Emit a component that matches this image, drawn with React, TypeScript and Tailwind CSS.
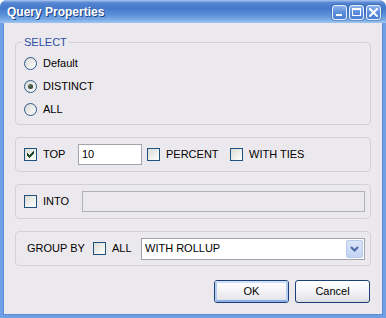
import React from "react";

const CHECK_PIXELS = [
  [6, 0],
  [5, 1], [6, 1],
  [0, 2], [4, 2], [5, 2], [6, 2],
  [0, 3], [1, 3], [3, 3], [4, 3], [5, 3],
  [0, 4], [1, 4], [2, 4], [3, 4], [4, 4],
  [1, 5], [2, 5], [3, 5],
  [2, 6],
];

function Check({ checked }: { checked?: boolean }) {
  return (
    <span className="w-[13px] h-[13px] shrink-0 border border-[#1c5180] bg-[linear-gradient(135deg,#dcdcd4_0%,#f4f4f2_70%,#ffffff_100%)] flex items-center justify-center">
      {checked && (
        <svg width="7" height="7" viewBox="0 0 7 7" shapeRendering="crispEdges">
          {CHECK_PIXELS.map(([x, y]) => (
            <rect key={`${x}-${y}`} x={x} y={y} width="1" height="1" fill="#1e4a2c" />
          ))}
        </svg>
      )}
    </span>
  );
}

function Radio({ checked }: { checked?: boolean }) {
  return (
    <span className="w-[13px] h-[13px] shrink-0 rounded-full border border-[#2a5a8c] bg-[linear-gradient(135deg,#d6d6d0_0%,#f2f2f0_65%,#ffffff_100%)] flex items-center justify-center">
      {checked && <span className="w-[5px] h-[5px] rounded-full bg-[radial-gradient(circle_at_35%_35%,#5a7a5e,#1c2e20)]" />}
    </span>
  );
}

function RadioRow({ label, checked }: { label: string; checked?: boolean }) {
  return (
    <div className="h-[23px] flex items-center pl-[8px]">
      <Radio checked={checked} />
      <span className="ml-[6px] text-black">{label}</span>
    </div>
  );
}

function TitleButton({ children }: { children: React.ReactNode }) {
  return (
    <div className="w-[15px] h-[15px] rounded-[3px] border border-[#e8f0fc] bg-[linear-gradient(180deg,#8cb3ec_0%,#5b8ddb_50%,#4a7ed2_100%)] flex items-center justify-center shadow-[0_0_0_1px_rgba(40,80,150,0.35)]">
      {children}
    </div>
  );
}

function Group({ children, className = "" }: { children: React.ReactNode; className?: string }) {
  return (
    <div className={`border border-[#d3d0d8] rounded-[4px] ${className}`}>{children}</div>
  );
}

function Button({ label, isDefault }: { label: string; isDefault?: boolean }) {
  return (
    <div className="w-[75px] h-[23px] rounded-[3px] border border-[#1c3f76] bg-[linear-gradient(180deg,#ffffff_0%,#f6f6f8_40%,#e6e6ec_85%,#d6d6de_100%)] flex items-center justify-center">
      <div
        className={`w-full h-full rounded-[2px] flex items-center justify-center ${
          isDefault ? "border-[2px] border-[#b6cdf2] border-t-[#cfe0fb] border-b-[#8fb0e8]" : ""
        }`}
      >
        <span className="text-black leading-none">{label}</span>
      </div>
    </div>
  );
}

export default function App() {
  return (
    <div className="w-[386px] h-[318px] font-['Liberation_Sans',Arial,sans-serif] text-[11px] select-none bg-white">
      <div className="w-[386px] h-[318px] flex flex-col rounded-t-[7px] overflow-hidden bg-[#6f9fe4]">
        {/* Title bar */}
        <div className="h-[23px] shrink-0 flex items-center pl-[7px] pr-[5px] bg-[linear-gradient(180deg,#a9c6f0_0%,#5585d2_12%,#4479cb_35%,#5a8fd8_65%,#7aaae6_85%,#a0c4f1_100%)]">
          <span className="text-white font-bold text-[12px] [text-shadow:1px_1px_0_#1e3f80] tracking-[0px]">
            Query Properties
          </span>
          <div className="ml-auto flex items-center gap-[2px] mt-[1px]">
            <TitleButton>
              <span className="w-[6px] h-[2px] bg-white mt-[6px] -ml-[2px]" />
            </TitleButton>
            <TitleButton>
              <span className="w-[9px] h-[8px] border border-white border-t-[2px]" />
            </TitleButton>
            <TitleButton>
              <svg width="9" height="9" viewBox="0 0 9 9">
                <path d="M1 1 L8 8 M8 1 L1 8" stroke="#ffffff" strokeWidth="2" strokeLinecap="square" />
              </svg>
            </TitleButton>
          </div>
        </div>

        {/* Client area */}
        <div className="flex-1 mx-[3px] mb-[3px] bg-[#ece9ee] border-l border-r border-b border-[#5b8ad6] flex flex-col px-[11px] pt-[13px]">
          {/* SELECT */}
          <fieldset className="border border-[#d3d0d8] rounded-[4px] pb-[3px]">
            <legend className="ml-[6px] px-[2px] text-[#2b4ea3] leading-[12px]">SELECT</legend>
            <div className="pt-[4px]">
              <RadioRow label="Default" />
              <RadioRow label="DISTINCT" checked />
              <RadioRow label="ALL" />
            </div>
          </fieldset>

          {/* TOP */}
          <Group className="mt-[12px] h-[35px] flex items-center pl-[8px]">
            <Check checked />
            <span className="ml-[6px] w-[35px]">TOP</span>
            <div className="w-[64px] h-[21px] bg-white border border-[#a3a3ad] flex items-center pl-[3px]">10</div>
            <div className="ml-[5px]">
              <Check />
            </div>
            <span className="ml-[6px] w-[64px]">PERCENT</span>
            <Check />
            <span className="ml-[6px]">WITH TIES</span>
          </Group>

          {/* INTO */}
          <Group className="mt-[12px] h-[35px] flex items-center pl-[8px]">
            <Check />
            <span className="ml-[6px] w-[39px]">INTO</span>
            <div className="w-[283px] h-[21px] border border-[#b1b1b8] bg-[#ece9ee]" />
          </Group>

          {/* GROUP BY */}
          <Group className="mt-[12px] h-[35px] flex items-center pl-[11px]">
            <span className="w-[66px]">GROUP BY</span>
            <Check />
            <span className="ml-[6px] w-[29px]">ALL</span>
            <div className="w-[224px] h-[22px] bg-white border border-[#a3a3ad] flex items-center">
              <span className="pl-[3px] flex-1">WITH ROLLUP</span>
              <div className="w-[17px] h-[18px] mr-[1px] rounded-[2px] border border-[#b9c9ea] bg-[linear-gradient(180deg,#dbe5f8_0%,#c3d3f2_100%)] flex items-center justify-center">
                <svg width="9" height="6" viewBox="0 0 9 6">
                  <path d="M1 1 L4.5 4.5 L8 1" stroke="#4d6aa8" strokeWidth="2" fill="none" />
                </svg>
              </div>
            </div>
          </Group>

          {/* Buttons */}
          <div className="mt-[14px] flex justify-end gap-[6px] pr-[1px]">
            <Button label="OK" isDefault />
            <Button label="Cancel" />
          </div>
        </div>
      </div>
    </div>
  );
}
